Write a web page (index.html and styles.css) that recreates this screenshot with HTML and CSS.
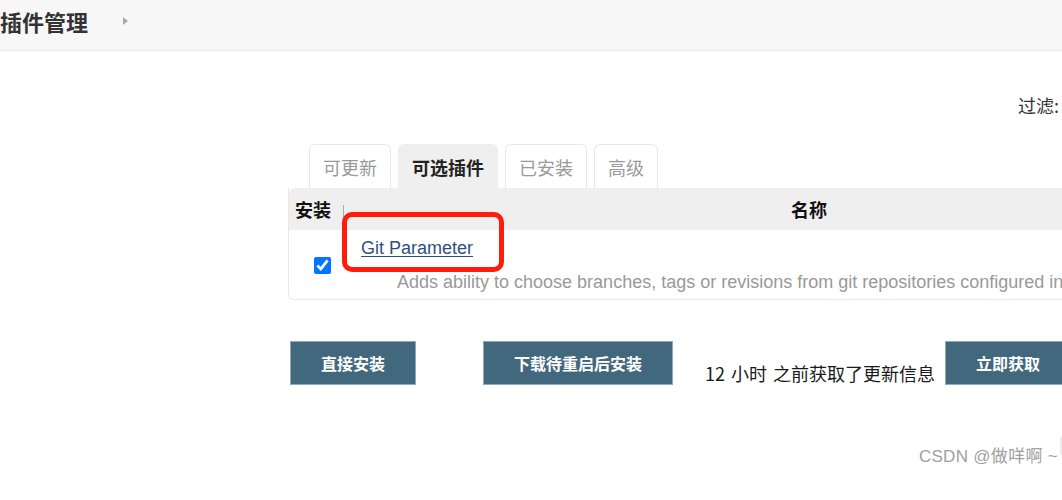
FILE: index.html
```html
<!DOCTYPE html>
<html lang="zh-CN">
<head>
<meta charset="utf-8">
<title>插件管理</title>
<link rel="stylesheet" href="styles.css">
</head>
<body>
<header class="top">
  <h1 class="title">插件管理</h1>
  <span class="crumb-arrow"></span>
</header>
<main class="content">
  <div class="filter-row"><label class="filter-label">过滤:</label></div>
  <section class="panel">
    <nav class="tabs">
      <a class="tab">可更新</a>
      <a class="tab active">可选插件</a>
      <a class="tab">已安装</a>
      <a class="tab">高级</a>
    </nav>
    <div class="plugin-table">
      <div class="thead">
        <div class="th-install">安装<span class="sort-mark"></span></div>
        <div class="th-name">名称</div>
      </div>
      <div class="row">
        <div class="td-install"><input type="checkbox" class="check" checked></div>
        <div class="td-name">
          <a class="plugin-link" href="#">Git Parameter</a>
          <div class="plugin-desc">Adds ability to choose branches, tags or revisions from git repositories configured in</div>
        </div>
      </div>
      <div class="annotation"></div>
    </div>
    <div class="actions">
      <button class="btn btn-first">直接安装</button>
      <button class="btn btn-second">下载待重启后安装</button>
      <span class="update-info">12 小时 之前获取了更新信息</span>
      <button class="btn btn-third">立即获取</button>
    </div>
  </section>
</main>
<span class="edge-sliver"></span>
<div class="watermark">CSDN @做咩啊 ~</div>
</body>
</html>
```
FILE: styles.css
```css
html, body {
  margin: 0;
  padding: 0;
  overflow: hidden;
}
body {
  width: 1062px;
  height: 500px;
  position: relative;
  background: #fff;
  font-family: "Liberation Sans", "Noto Sans CJK SC", Arial, sans-serif;
  color: #333;
}
.top {
  height: 51px;
  box-sizing: border-box;
  background: #f7f7f7;
  border-bottom: 1px solid #e5ecf0;
  display: flex;
  align-items: center;
  padding-bottom: 8px;
}
.title {
  margin: 0;
  font-family: "Noto Sans CJK SC", sans-serif;
  font-size: 22px;
  line-height: 26px;
  font-weight: 700;
  color: #333;
}
.crumb-arrow {
  margin-left: 35px;
  width: 0;
  height: 0;
  border-top: 4.5px solid transparent;
  border-bottom: 4.5px solid transparent;
  border-left: 5px solid #aaa;
}
.content {
  overflow: hidden;
}
.filter-row {
  display: flex;
  justify-content: flex-end;
  margin-top: 42px;
  padding-right: 3px;
}
.filter-label {
  font-family: "Noto Sans CJK SC", sans-serif;
  font-size: 18px;
  line-height: 24px;
  color: #333;
}
.panel {
  margin-top: 27px;
  margin-left: 288px;
}
.tabs {
  display: flex;
  gap: 7px;
  padding-left: 21px;
}
.tab {
  height: 44px;
  box-sizing: border-box;
  padding: 0 13px;
  border: 1px solid #e8e8e8;
  border-bottom: none;
  border-radius: 6px 6px 0 0;
  display: flex;
  align-items: center;
  font-family: "Noto Sans CJK SC", sans-serif;
  font-size: 18px;
  color: #999;
  background: #fff;
}
.tab.active {
  background: #efefef;
  border-color: #efefef;
  color: #222;
  font-weight: 700;
}
.plugin-table {
  position: relative;
  width: 984px;
  border: 1px solid #e8e8e8;
  border-top: none;
  border-radius: 0 0 6px 6px;
}
.thead {
  display: flex;
  align-items: center;
  height: 42px;
  background: #efefef;
  border-radius: 6px 6px 0 0;
  font-family: "Noto Sans CJK SC", sans-serif;
  font-size: 18px;
  font-weight: 700;
  color: #111;
}
.th-install {
  width: 56px;
  box-sizing: border-box;
  padding-left: 6px;
  display: flex;
  align-items: center;
}
.sort-mark {
  margin-left: 12px;
  width: 1px;
  height: 13px;
  background: #aaa;
  margin-top: 4px;
}
.th-name {
  flex: 1;
  text-align: center;
}
.row {
  display: flex;
  height: 69px;
}
.td-install {
  width: 56px;
  box-sizing: border-box;
  padding-left: 25px;
  display: flex;
  align-items: center;
  padding-top: 2px;
}
.check {
  margin: 0;
  width: 17px;
  height: 17px;
  accent-color: #0075ff;
}
.td-name {
  flex: 1;
  padding: 5px 16px 0;
}
.plugin-link {
  display: inline-block;
  font-size: 18px;
  line-height: 26px;
  color: #2f4f82;
  text-decoration: underline;
  text-underline-offset: 2px;
}
.plugin-desc {
  margin-top: 8px;
  padding-left: 36px;
  font-size: 18px;
  line-height: 26px;
  color: #999;
  white-space: nowrap;
}
.annotation {
  position: absolute;
  left: 53px;
  top: 24px;
  width: 162px;
  height: 60px;
  box-sizing: border-box;
  border: 5px solid #ff1c0a;
  border-radius: 10px;
}
.actions {
  display: flex;
  align-items: flex-end;
  margin-top: 41px;
  padding-left: 2px;
}
.btn {
  height: 44px;
  padding: 0 30px;
  border: 1px solid #8fa9b8;
  background: #42687e;
  color: #fff;
  font-family: "Noto Sans CJK SC", sans-serif;
  font-size: 16px;
  font-weight: 700;
  line-height: 20px;
  white-space: nowrap;
  flex-shrink: 0;
}
.btn-second {
  margin-left: 67px;
}
.update-info {
  margin-left: 32px;
  font-family: "Noto Sans CJK SC", sans-serif;
  font-size: 18px;
  line-height: 24px;
  color: #1a1a1a;
  white-space: nowrap;
  word-spacing: 2px;
}
.btn-third {
  margin-left: 10px;
}
.edge-sliver {
  position: absolute;
  right: 0;
  top: 437px;
  width: 2px;
  height: 18px;
  background: #ececec;
}
.watermark {
  position: absolute;
  right: 4px;
  top: 445px;
  font-family: "Liberation Sans", "Noto Sans CJK SC", sans-serif;
  font-size: 17px;
  line-height: 24px;
  color: #a0a0a0;
  white-space: nowrap;
  letter-spacing: 0.3px;
}
```
